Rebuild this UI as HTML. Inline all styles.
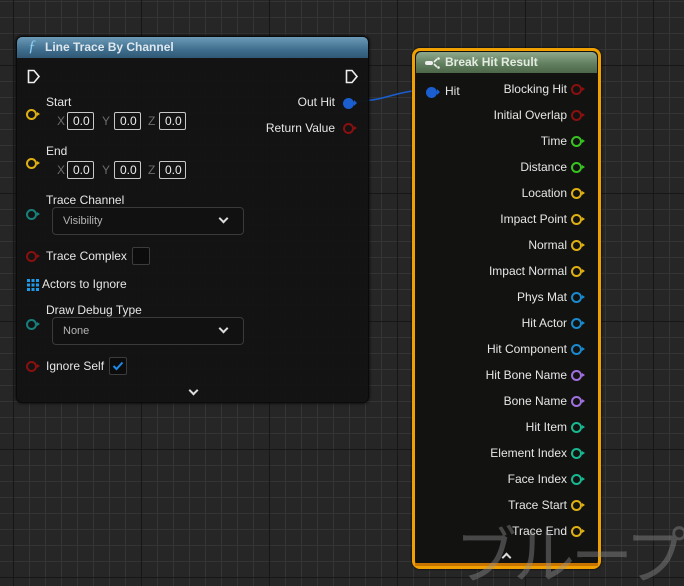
<!DOCTYPE html>
<html><head><meta charset="utf-8"><style>
*{box-sizing:border-box;margin:0;padding:0}
html{width:684px;height:586px;overflow:hidden}
body{width:684px;height:586px;overflow:hidden;position:relative;font-family:"Liberation Sans",sans-serif;font-size:12px;color:#e6e6e6;
background-color:#262626;
background-image:
linear-gradient(90deg,transparent 13px,#171717 13px,#171717 14px,transparent 14px),
linear-gradient(180deg,transparent 65px,#171717 65px,#171717 66px,transparent 66px),
linear-gradient(90deg,transparent 13px,#343434 13px,#343434 14px,transparent 14px),
linear-gradient(180deg,transparent 1px,#343434 1px,#343434 2px,transparent 2px);
background-size:128px 128px,128px 128px,16px 16px,16px 16px;
background-position:-128px 0,0 0,0 0,0 0;}
.a{position:absolute;white-space:nowrap}
.wm{position:absolute;left:455px;top:520px;font-family:"Noto Sans CJK JP",sans-serif;font-size:62px;line-height:1;color:rgba(150,150,150,.4);letter-spacing:-4px;white-space:nowrap;z-index:5}
.node1{position:absolute;left:16px;top:36px;width:353px;height:367px;background:rgba(18,19,18,.96);border-radius:6px;border:1px solid #0a0a0a;box-shadow:0 0 3px #000}
.h1{position:absolute;left:0;top:0;width:100%;height:21px;border-radius:5px 5px 0 0;background:linear-gradient(180deg,#6c9bb8,#3f6e8e 60%,#2f5874);color:#dfe7ee;font-weight:bold;font-size:12px;padding:3px 0 0 28px}
.node2{position:absolute;left:412px;top:48px;width:189px;height:521px;border:3px solid #f0a000;border-radius:8px;background:#121311;box-shadow:0 0 2px #000}
.node2:after{content:"";position:absolute;left:0;right:0;bottom:0;height:3px;background:#c87400}
.h2{position:absolute;left:1px;top:1px;right:1px;height:21px;border-radius:5px 5px 0 0;background:linear-gradient(180deg,#8fa88c,#5f7d5c 60%,#4c6649);color:#e4ece2;font-weight:bold;font-size:12px;padding:3px 0 0 29px}
.pin{position:absolute;width:11px;height:11px;border-radius:50%;border:2px solid}
.tri{position:absolute;border-top:2.5px solid transparent;border-bottom:2.5px solid transparent}
.box{position:absolute;height:18px;border:1px solid #c8c8c8;border-radius:2px;font-size:12px;padding:1px 0 0 5px;width:27px;color:#eee}
.xl{position:absolute;color:#6c6c6c;font-size:12px}
.dd{position:absolute;left:51px;width:192px;height:28px;border:1px solid #3a3a3a;border-radius:4px;background:#101110;color:#b4b4b4;font-size:11px;padding:7px 0 0 10px}
.chev{position:absolute;width:7px;height:7px;border-right:2px solid #ddd;border-bottom:2px solid #ddd;transform:rotate(45deg)}
.rt{position:absolute;right:34px;text-align:right;white-space:nowrap}
</style></head><body>
<svg class="a" style="left:0;top:0" width="684" height="586"><path d="M356 101 C385 101,390 93,420 90" stroke="#1a5ed0" stroke-width="1.6" fill="none"/></svg>

<div class="node1">
<div class="h1">Line Trace By Channel</div>
<div class="a" style="left:11px;top:1px;color:#8fd0f5;font-style:italic;font-family:'Liberation Serif',serif;font-size:16px">ƒ</div>
<svg class="a" style="left:10px;top:32px" width="14" height="15"><path d="M1.5 1.5H7L12 7.5 7 13.5H1.5Z" fill="none" stroke="#eee" stroke-width="1.6"/></svg>
<svg class="a" style="left:328px;top:32px" width="14" height="15"><path d="M1.5 1.5H7L12 7.5 7 13.5H1.5Z" fill="none" stroke="#eee" stroke-width="1.6"/></svg>
<span class="pin" style="left:9px;top:72px;border-color:#e0b012"></span><span class="tri" style="left:20px;top:75px;border-left:3px solid #e0b012"></span><div class="a" style="left:29px;top:58px">Start</div>
<div class="xl" style="left:40px;top:77px">X</div><div class="box" style="left:50px;top:75px">0.0</div>
<div class="xl" style="left:85px;top:77px">Y</div><div class="box" style="left:97px;top:75px">0.0</div>
<div class="xl" style="left:131px;top:77px">Z</div><div class="box" style="left:142px;top:75px">0.0</div>
<span class="pin" style="left:9px;top:121px;border-color:#e0b012"></span><span class="tri" style="left:20px;top:124px;border-left:3px solid #e0b012"></span><div class="a" style="left:29px;top:107px">End</div>
<div class="xl" style="left:40px;top:126px">X</div><div class="box" style="left:50px;top:124px">0.0</div>
<div class="xl" style="left:85px;top:126px">Y</div><div class="box" style="left:97px;top:124px">0.0</div>
<div class="xl" style="left:131px;top:126px">Z</div><div class="box" style="left:142px;top:124px">0.0</div>
<span class="pin" style="left:9px;top:172px;border-color:#18807c"></span><span class="tri" style="left:20px;top:175px;border-left:3px solid #18807c"></span><div class="a" style="left:29px;top:156px">Trace Channel</div>
<div class="dd" style="left:35px;top:170px">Visibility<span class="chev" style="left:167px;top:7px"></span></div>
<span class="pin" style="left:9px;top:214px;border-color:#8a1010"></span><span class="tri" style="left:20px;top:217px;border-left:3px solid #8a1010"></span><div class="a" style="left:29px;top:212px">Trace Complex</div>
<div class="a" style="left:115px;top:210px;width:18px;height:18px;border:1px solid #3c3c3c;border-radius:2px;background:#0c0c0c"></div>
<svg class="a" style="left:10px;top:242px" width="12" height="12"><g fill="#1e9ae8"><rect x="0" y="0" width="3" height="3"/><rect x="4.5" y="0" width="3" height="3"/><rect x="9" y="0" width="3" height="3"/><rect x="0" y="4.5" width="3" height="3"/><rect x="4.5" y="4.5" width="3" height="3"/><rect x="9" y="4.5" width="3" height="3"/><rect x="0" y="9" width="3" height="3"/><rect x="4.5" y="9" width="3" height="3"/><rect x="9" y="9" width="3" height="3"/></g></svg>
<div class="a" style="left:25px;top:240px">Actors to Ignore</div>
<span class="pin" style="left:9px;top:282px;border-color:#18807c"></span><span class="tri" style="left:20px;top:285px;border-left:3px solid #18807c"></span><div class="a" style="left:29px;top:266px">Draw Debug Type</div>
<div class="dd" style="left:35px;top:280px">None<span class="chev" style="left:167px;top:7px"></span></div>
<span class="pin" style="left:9px;top:324px;border-color:#8a1010"></span><span class="tri" style="left:20px;top:327px;border-left:3px solid #8a1010"></span><div class="a" style="left:29px;top:322px">Ignore Self</div>
<div class="a" style="left:92px;top:320px;width:18px;height:18px;border:1px solid #3c3c3c;border-radius:2px;background:#0c0c0c"></div>
<svg class="a" style="left:95px;top:324px" width="12" height="10"><path d="M1.5 5L4.5 8 10.5 1.5" stroke="#1e8ae8" stroke-width="2" fill="none"/></svg>
<span class="chev" style="left:173px;top:350px"></span>
<div class="rt" style="right:33px;top:58px">Out Hit</div>
<span class="a" style="left:326px;top:61px;width:11px;height:11px;border-radius:50%;background:#1a5ed0"></span><span class="a" style="left:337px;top:63px;border-left:3px solid #1a5ed0;border-top:3px solid transparent;border-bottom:3px solid transparent"></span>
<div class="rt" style="right:33px;top:84px">Return Value</div>
<span class="pin" style="left:326px;top:86px;border-color:#8a1010"></span><span class="tri" style="left:337px;top:89px;border-left:3px solid #8a1010"></span>
</div>

<div class="node2">
<div class="h2">Break Hit Result</div>
<svg class="a" style="left:10px;top:6px" width="16" height="12"><rect x="0" y="4" width="8" height="4" rx="2" fill="#eee"/><path d="M9 5L12 2M9 7L12 10" stroke="#eee" stroke-width="1.6"/><circle cx="13.5" cy="1.5" r="1.3" fill="#eee"/><circle cx="13.5" cy="10.5" r="1.3" fill="#eee"/></svg>
<span class="a" style="left:11px;top:36px;width:11px;height:11px;border-radius:50%;background:#1a5ed0"></span><span class="a" style="left:22px;top:38px;border-left:3px solid #1a5ed0;border-top:3px solid transparent;border-bottom:3px solid transparent"></span>
<div class="a" style="left:30px;top:33px">Hit</div>
<span class="chev" style="left:88px;top:503px;transform:rotate(225deg)"></span>
</div>
<div id="rows"></div>
<div class="wm">ブループ</div>
<script>
var d=[["Blocking Hit","#8a1010"],["Initial Overlap","#8a1010"],["Time","#38c420"],["Distance","#38c420"],["Location","#e0b012"],["Impact Point","#e0b012"],["Normal","#e0b012"],["Impact Normal","#e0b012"],["Phys Mat","#1a8ad0"],["Hit Actor","#1a8ad0"],["Hit Component","#1a8ad0"],["Hit Bone Name","#a070e0"],["Bone Name","#a070e0"],["Hit Item","#18b890"],["Element Index","#18b890"],["Face Index","#18b890"],["Trace Start","#e0b012"],["Trace End","#e0b012"]];
var h="";d.forEach(function(e,i){var y=82+26*i;
h+='<div class="a" style="right:117px;top:'+y+'px;text-align:right">'+e[0]+'</div>'+
'<span class="a" style="left:571px;top:'+(y+2)+'px;width:11px;height:11px;border-radius:50%;border:2px solid '+e[1]+'"></span>'+
'<span class="a" style="left:582px;top:'+(y+5)+'px;border-left:3px solid '+e[1]+';border-top:2.5px solid transparent;border-bottom:2.5px solid transparent"></span>';});
document.getElementById("rows").innerHTML=h;
</script>
</body></html>
